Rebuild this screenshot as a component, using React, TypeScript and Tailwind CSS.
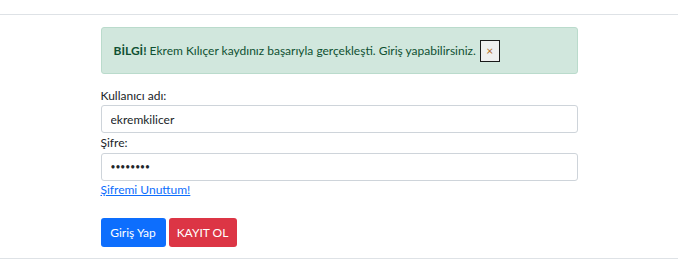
import { useState } from "react";

export default function App() {
  const [user, setUser] = useState("ekremkilicer");
  const [pass, setPass] = useState("12345678");
  const [showAlert, setShowAlert] = useState(true);

  return (
    <div className="w-[678px] h-[262px] bg-white text-[12px] leading-[1.5] text-[#212529] font-['Lato',sans-serif]">
      <div className="h-[14px]" />
      <div className="border-t border-[#dee2e6] pt-[12px] pb-[11px] border-b">
        <div className="w-[477px] mx-auto">
          {/* bilgi mesajı */}
          {showAlert && (
            <div className="flex items-center h-[47px] px-[12px] mb-[13px] bg-[#d1e7dd] border border-[#badbcc] rounded-[3px] text-[#0f5132]">
              <strong className="font-bold mr-[3px]">BİLGİ!</strong>
              <span>Ekrem Kılıçer kaydınız başarıyla gerçekleşti. Giriş yapabilirsiniz.</span>
              <button
                onClick={() => setShowAlert(false)}
                className="ml-[4px] w-[20px] h-[22px] border border-[#1a1a1a] bg-[#efefef] text-[#b06a28] text-[12px] leading-none flex items-center justify-center"
              >
                ×
              </button>
            </div>
          )}

          <label className="block h-[18px]">Kullanıcı adı:</label>
          <input
            type="text"
            value={user}
            onChange={(e) => setUser(e.target.value)}
            className="block w-full h-[28px] px-[9px] border border-[#ced4da] rounded-[3px] text-[#212529] focus:outline-none"
          />

          <label className="block h-[19px] mt-px">Şifre:</label>
          <input
            type="password"
            value={pass}
            onChange={(e) => setPass(e.target.value)}
            className="block w-full h-[28px] px-[9px] border border-[#ced4da] rounded-[3px] text-[8.5px] text-[#212529] focus:outline-none"
          />
          <a href="#" className="inline-block h-[18px] text-[#0d6efd] underline">Şifremi Unuttum!</a>

          <div className="flex gap-[3px] mt-[19px]">
            <button className="h-[29px] w-[65px] bg-[#0d6efd] text-white rounded-[3px]">Giriş Yap</button>
            <button className="h-[29px] w-[68px] bg-[#dc3545] text-white rounded-[3px]">KAYIT OL</button>
          </div>
        </div>
      </div>
    </div>
  );
}
